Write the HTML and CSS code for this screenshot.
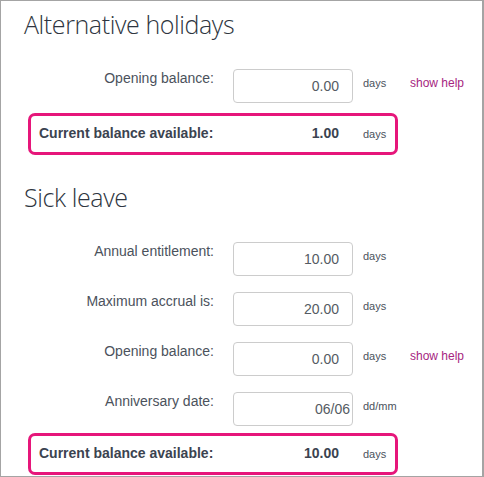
FILE: index.html
```html
<!DOCTYPE html>
<html lang="en">
<head>
<meta charset="utf-8">
<title>Leave balances</title>
<link rel="stylesheet" href="styles.css">
</head>
<body>
<div class="page">
  <section class="section">
    <h2 class="heading">Alternative holidays</h2>
    <div class="row row--first">
      <label class="label">Opening balance:</label>
      <div class="field">0.00</div>
      <span class="unit">days</span>
      <a class="help" href="#">show help</a>
    </div>
    <div class="balance balance--first">
      <span class="balance-label">Current balance available:</span>
      <span class="balance-value">1.00</span>
      <span class="balance-unit">days</span>
    </div>
  </section>
  <section class="section">
    <h2 class="heading heading--second">Sick leave</h2>
    <div class="row row--first">
      <label class="label">Annual entitlement:</label>
      <div class="field">10.00</div>
      <span class="unit">days</span>
    </div>
    <div class="row">
      <label class="label">Maximum accrual is:</label>
      <div class="field">20.00</div>
      <span class="unit">days</span>
    </div>
    <div class="row">
      <label class="label">Opening balance:</label>
      <div class="field">0.00</div>
      <span class="unit">days</span>
      <a class="help" href="#">show help</a>
    </div>
    <div class="row">
      <label class="label">Anniversary date:</label>
      <div class="field field--date">06/06</div>
      <span class="unit">dd/mm</span>
    </div>
    <div class="balance balance--last">
      <span class="balance-label">Current balance available:</span>
      <span class="balance-value">10.00</span>
      <span class="balance-unit">days</span>
    </div>
  </section>
</div>
</body>
</html>
```

FILE: styles.css
```css
html, body {
  margin: 0;
  padding: 0;
  background: #ffffff;
}

.page {
  width: 484px;
  height: 477px;
  box-sizing: border-box;
  border: 1px solid #a4a4a4;
  border-right-width: 2px;
  padding: 7px 0 0 23px;
  overflow: hidden;
  font-family: "Liberation Sans", Arial, sans-serif;
  color: #4b525c;
}

.heading {
  margin: 0;
  font-family: "Open Sans", sans-serif;
  font-weight: 300;
  font-size: 25px;
  line-height: 32px;
  letter-spacing: -0.4px;
  color: #2e3540;
}

.heading--second {
  margin-top: 26px;
}

.row {
  display: flex;
  align-items: flex-start;
  margin-top: 16px;
}

.row--first {
  margin-top: 29px;
}

.label {
  width: 190px;
  margin-right: 19px;
  text-align: right;
  font-size: 14px;
  line-height: 18px;
  color: #4b525c;
}

.field {
  width: 120px;
  height: 34px;
  box-sizing: border-box;
  border: 1px solid #cccccc;
  border-radius: 4px;
  padding: 0 13px 0 8px;
  text-align: right;
  font-size: 14px;
  line-height: 32px;
  color: #555b63;
}

.field--date {
  padding-right: 2px;
}

.unit {
  width: 47px;
  margin-left: 10px;
  padding-top: 7px;
  font-size: 11px;
  line-height: 14px;
  color: #4b525c;
}

.help {
  padding-top: 7px;
  font-size: 12px;
  line-height: 14px;
  color: #a6247f;
  text-decoration: none;
}

.balance {
  width: 370px;
  margin-left: 4px;
  box-sizing: border-box;
  border: 3px solid #e6167a;
  border-radius: 7px;
  padding: 8px 0 10px 8px;
  display: grid;
  grid-template-columns: 1fr auto 32px;
  align-items: baseline;
}

.balance--first {
  margin-top: 10px;
}

.balance--last {
  margin-top: 7px;
}

.balance-label {
  font-size: 14px;
  font-weight: bold;
  line-height: 18px;
  color: #3b4350;
}

.balance-value {
  margin-right: 24px;
  font-size: 14px;
  font-weight: bold;
  line-height: 18px;
  color: #3b4350;
}

.balance-unit {
  font-size: 11px;
  line-height: 14px;
  color: #4b525c;
}
```
